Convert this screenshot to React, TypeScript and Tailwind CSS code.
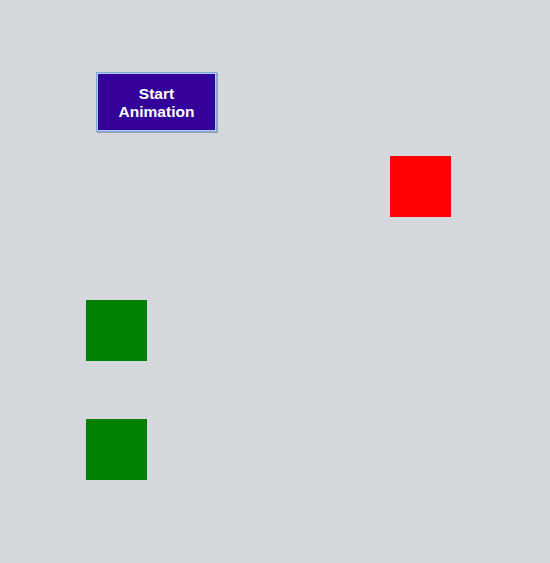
export default function App() {
  return (
    <div className="relative h-[563px] w-[550px] overflow-hidden bg-[#d4d8dc] font-['Liberation_Sans',Arial,sans-serif]">
      <button className="absolute left-[96px] top-[72px] flex h-[60px] w-[121px] items-center justify-center border border-[#7ea6e0] bg-[#330099] pt-px text-center text-[15.5px] font-bold leading-[18px] text-white shadow-[inset_0_0_0_1px_#b9cdf0,1px_1px_0_0_#9aa3ad]">
        Start
        <br />
        Animation
      </button>

      {/* animated squares */}
      <div className="absolute left-[390px] top-[156px] h-[61px] w-[61px] bg-[#ff0000]" />
      <div className="absolute left-[86px] top-[300px] h-[61px] w-[61px] bg-[#008000]" />
      <div className="absolute left-[86px] top-[419px] h-[61px] w-[61px] bg-[#008000]" />
    </div>
  );
}
